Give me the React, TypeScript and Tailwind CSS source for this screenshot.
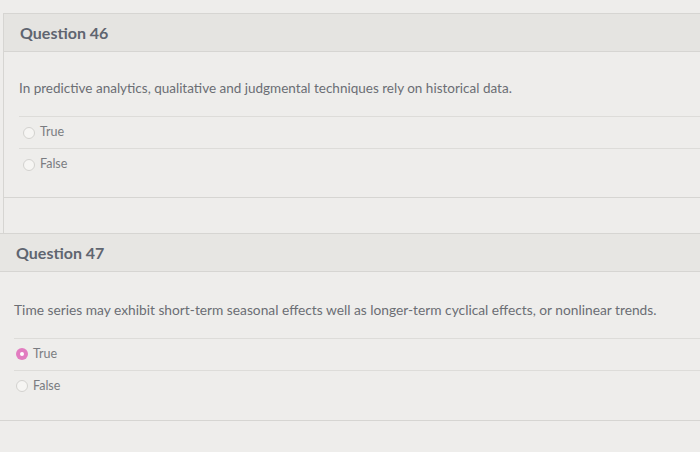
import React from 'react';

type Option = { label: string; checked?: boolean };

const Radio: React.FC<{ checked?: boolean }> = ({ checked }) =>
  checked ? (
    <span className="flex h-[12px] w-[12px] items-center justify-center rounded-full bg-[#e27cc0]">
      <span className="h-[4px] w-[4px] rounded-full bg-white" />
    </span>
  ) : (
    <span className="h-[12px] w-[12px] rounded-full border border-[#d3d2cf] bg-[#f6f5f3]" />
  );

const OptionRow: React.FC<{ option: Option; pad: string }> = ({ option, pad }) => (
  <div className={`flex h-[32px] items-center gap-[5px] border-t border-[#dddcd9] ${pad}`}>
    <Radio checked={option.checked} />
    <span className="text-[12.5px] text-[#7a7c81]">{option.label}</span>
  </div>
);

export default function App() {
  return (
    <div
      className="h-[452px] w-[700px] overflow-hidden bg-[#eeedeb]"
      style={{ fontFamily: 'Lato, "Open Sans", sans-serif' }}
    >
      {/* Question 46 */}
      <div className="ml-[3px] mt-[13px] border-l border-t border-[#d6d5d2]">
        <div className="flex h-[38px] items-center border-b border-[#d6d5d2] bg-[#e5e4e1] pl-[16px]">
          <h2 className="text-[16px] font-bold text-[#5f6570]">Question 46</h2>
        </div>
        <div className="pl-[15px] pt-[26px]">
          <p className="text-[13.5px] text-[#6b6e74]">
            In predictive analytics, qualitative and judgmental techniques rely on historical data.
          </p>
          <div className="mt-[18px]">
            <OptionRow option={{ label: 'True' }} pad="pl-[4px]" />
            <OptionRow option={{ label: 'False' }} pad="pl-[4px]" />
          </div>
        </div>
        <div className="mt-[17px] h-[36px] border-t border-[#d6d5d2]" />
      </div>

      {/* Question 47 */}
      <div className="border-t border-[#d6d5d2]">
        <div className="flex h-[38px] items-center border-b border-[#d6d5d2] bg-[#e7e6e3] pl-[16px]">
          <h2 className="text-[16px] font-bold text-[#5f6570]">Question 47</h2>
        </div>
        <div className="pl-[14px] pt-[28px]">
          <p className="text-[13.75px] text-[#6b6e74]">
            Time series may exhibit short-term seasonal effects well as longer-term cyclical effects, or nonlinear trends.
          </p>
          <div className="mt-[17px]">
            <OptionRow option={{ label: 'True', checked: true }} pad="pl-[2px]" />
            <OptionRow option={{ label: 'False' }} pad="pl-[2px]" />
          </div>
        </div>
        <div className="mt-[18px] border-t border-[#d6d5d2]" />
      </div>
    </div>
  );
}
